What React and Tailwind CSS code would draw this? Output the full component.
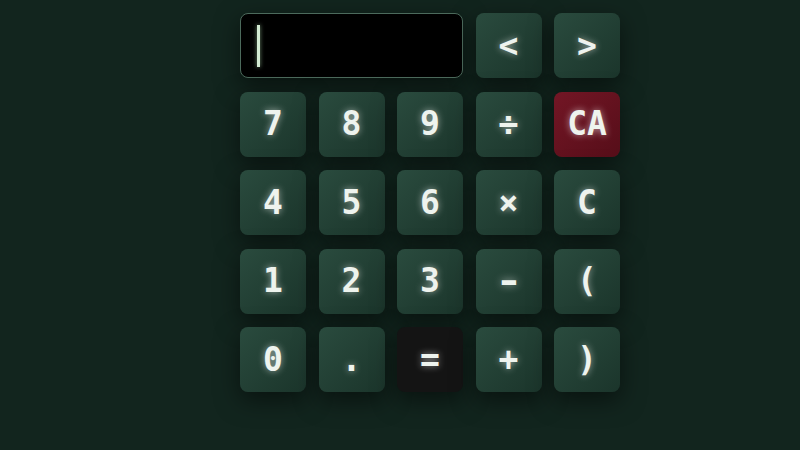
import { useState } from "react";

const KEYS = [
  ["7", "8", "9", "÷", "CA"],
  ["4", "5", "6", "×", "C"],
  ["1", "2", "3", "-", "("],
  ["0", ".", "=", "+", ")"],
];

const keyBase =
  "flex h-[65px] w-[66px] items-center justify-center rounded-lg text-[33px] font-bold text-[#eef3ee] shadow-[0_8px_24px_rgba(0,0,0,0.5)] [text-shadow:0_0_7px_rgba(255,255,255,0.55)]";

function keyTone(label) {
  if (label === "CA") return "bg-gradient-to-br from-[#731625] to-[#560e19]";
  if (label === "=") return "bg-[#141414]";
  return "bg-gradient-to-br from-[#2a4b3e] to-[#1b352b]";
}

export default function App() {
  const [expr, setExpr] = useState("");

  const press = (label) => {
    if (label === "CA") return setExpr("");
    if (label === "C") return setExpr((v) => v.slice(0, -1));
    if (label === "=") return;
    setExpr((v) => v + label);
  };

  return (
    <div
      className="min-h-[450px] w-full bg-[#12251e] pl-[240px] pt-[13px]"
      style={{ fontFamily: '"DejaVu Sans Mono", "Liberation Mono", monospace' }}
    >
      <div className="grid w-fit grid-cols-[repeat(5,66px)] gap-x-[12.5px] gap-y-[13.5px]">
        <div className="col-span-3 flex h-[65px] items-center rounded-lg border border-[#4c6a5c] bg-black px-4 shadow-[0_8px_24px_rgba(0,0,0,0.5)]">
          <span className="text-[33px] font-bold text-[#eef3ee]">{expr}</span>
          <div className="h-[42px] w-[3px] bg-[#d2ead2] shadow-[0_0_4px_rgba(190,240,190,0.6)]" />
        </div>
        <button className={`${keyBase} ${keyTone("<")}`}>&lt;</button>
        <button className={`${keyBase} ${keyTone(">")}`}>&gt;</button>

        {KEYS.flat().map((label) => (
          <button
            key={label}
            onClick={() => press(label)}
            className={`${keyBase} ${keyTone(label)}`}
          >
            {label === "-" ? <span className="inline-block scale-x-[1.4]">-</span> : label}
          </button>
        ))}
      </div>
    </div>
  );
}
